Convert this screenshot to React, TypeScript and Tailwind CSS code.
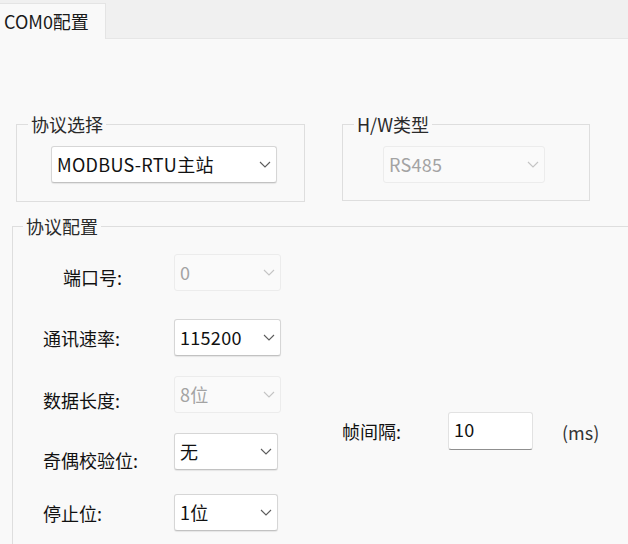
import React from 'react';

function Chevron({ disabled }: { disabled?: boolean }) {
    return (
        <svg width="12" height="7" viewBox="0 0 12 7" className="shrink-0">
            <path d="M1 1 L6 6 L11 1" fill="none" stroke={disabled ? '#c4c4c4' : '#5c5c5c'} strokeWidth="1.1" />
        </svg>
    );
}

function Combo({ value, width, disabled }: { value: string; width: string; disabled?: boolean }) {
    const base = 'flex items-center justify-between h-[37px] pl-[5px] pr-[5px] rounded-[3px] text-[18px] leading-none';
    const look = disabled
        ? 'bg-[#fafafa] border border-[#ececec] text-[#a3a3a3]'
        : 'bg-white border border-[#d6d6d6] border-b-[#c2c2c2] shadow-[0_1px_1px_rgba(0,0,0,0.08)] text-[#111]';
    return (
        <div className={`${base} ${look} ${width}`}>
            <span className="pb-[2px] tracking-[0.3px]">{value}</span>
            <Chevron disabled={disabled} />
        </div>
    );
}

export default function App() {
    return (
        <div className="w-[628px] h-[544px] overflow-hidden bg-[#f9f9f9] text-[#111] font-['Noto_Sans_CJK_SC','Noto_Sans',sans-serif]">
            <div className="h-[39px] bg-[#f0f0f0] border-b border-[#e6e6e6] flex items-end">
                <div className="w-[106px] h-[36px] bg-[#f9f9f9] border-t border-r border-[#e4e4e4] -mb-px flex items-center pl-[4px] text-[18px] text-[#1a1a1a]">
                    COM0配置
                </div>
            </div>

            <div className="flex mt-[76px]">
                <fieldset className="ml-[16px] w-[289px] h-[87px] border border-[#dedede] pl-[34px] pr-0">
                    <legend className="ml-[-23px] px-[3px] text-[18px] leading-[18px] text-[#2a2a2a]">协议选择</legend>
                    <div className="mt-[13px]">
                        <Combo value="MODBUS-RTU主站" width="w-[226px]" />
                    </div>
                </fieldset>
                <fieldset className="ml-[37px] w-[248px] h-[86px] border border-[#dedede] pl-[40px] pr-0">
                    <legend className="ml-[-29px] px-[3px] text-[18px] leading-[18px] text-[#2a2a2a]">H/W类型</legend>
                    <div className="mt-[13px]">
                        <Combo value="RS485" width="w-[162px]" disabled />
                    </div>
                </fieldset>
            </div>

            <fieldset className="ml-[12px] mt-[15px] w-[640px] h-[400px] border border-[#dedede] p-0">
                <legend className="ml-[10px] px-[3px] text-[18px] leading-[18px] text-[#2a2a2a]">协议配置</legend>
                <div className="flex">
                    <div className="flex flex-col text-[18px]">
                        <div className="flex items-start mt-[19px]">
                            <span className="w-[161px] pl-[50px] mt-[13px] leading-[20px]">端口号:</span>
                            <Combo value="0" width="w-[107px]" disabled />
                        </div>
                        <div className="flex items-start mt-[28px]">
                            <span className="w-[161px] pl-[30px] mt-[9px] leading-[20px]">通讯速率:</span>
                            <Combo value="115200" width="w-[107px]" />
                        </div>
                        <div className="flex items-start mt-[20px]">
                            <span className="w-[161px] pl-[30px] mt-[14px] leading-[20px]">数据长度:</span>
                            <Combo value="8位" width="w-[107px]" disabled />
                        </div>
                        <div className="flex items-start mt-[20px]">
                            <span className="w-[161px] pl-[30px] mt-[17px] leading-[20px]">奇偶校验位:</span>
                            <Combo value="无" width="w-[104px]" />
                        </div>
                        <div className="flex items-start mt-[24px]">
                            <span className="w-[161px] pl-[30px] mt-[9px] leading-[20px]">停止位:</span>
                            <Combo value="1位" width="w-[104px]" />
                        </div>
                    </div>
                    <div className="flex items-start mt-[177px] ml-[61px] text-[18px]">
                        <span className="w-[106px] mt-[9px] leading-[20px]">帧间隔:</span>
                        <div className="w-[85px] h-[38px] bg-white border border-[#e2e2e2] border-b-[#8f8f8f] rounded-[3px] pl-[5px] pt-[6px] leading-[20px] tracking-[0.3px]">10</div>
                        <span className="ml-[29px] mt-[10px] leading-[20px] text-[#333]">(ms)</span>
                    </div>
                </div>
            </fieldset>
        </div>
    );
}
